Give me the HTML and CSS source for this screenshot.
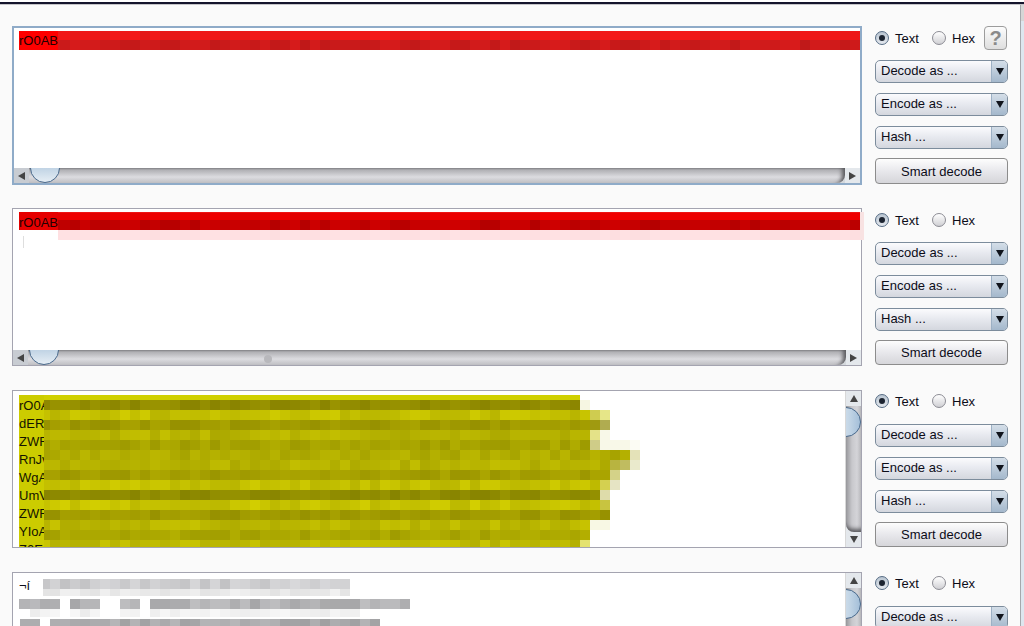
FILE: index.html
```html
<!DOCTYPE html>
<html lang="en">
<head>
<meta charset="utf-8">
<title>Decoder</title>
<link rel="stylesheet" href="styles.css">
</head>
<body>
<div class="topbar"></div>
<div class="shell">
  <main class="page">

    <section class="row">
      <div class="editor focused" data-mosaic="red1">
        <div class="text text-red1"><span class="hl-red">rO0AB</span></div>
        <div class="hscroll"><span class="arrow arrow-left"></span><div class="htrack"><span class="hthumb"></span></div><span class="arrow arrow-right"></span></div>
      </div>
      <div class="controls">
        <div class="modes">
          <label class="mode"><span class="radio on"></span>Text</label>
          <label class="mode mode-hex"><span class="radio"></span>Hex</label>
          <button class="help">?</button>
        </div>
        <div class="select"><span class="select-label">Decode as ...</span><span class="select-arrow"></span></div>
        <div class="select"><span class="select-label">Encode as ...</span><span class="select-arrow"></span></div>
        <div class="select"><span class="select-label">Hash ...</span><span class="select-arrow"></span></div>
        <button class="smart smart-tall">Smart decode</button>
      </div>
    </section>

    <section class="row">
      <div class="editor editor-short" data-mosaic="red2">
        <div class="text text-red2"><span class="hl-red hl-red2">rO0AB</span><span class="ibeam"></span></div>
        <div class="hscroll"><span class="arrow arrow-left"></span><div class="htrack"><span class="hthumb"></span><span class="blob"></span></div><span class="arrow arrow-right"></span></div>
      </div>
      <div class="controls">
        <div class="modes">
          <label class="mode"><span class="radio on"></span>Text</label>
          <label class="mode mode-hex"><span class="radio"></span>Hex</label>
        </div>
        <div class="select"><span class="select-label">Decode as ...</span><span class="select-arrow"></span></div>
        <div class="select"><span class="select-label">Encode as ...</span><span class="select-arrow"></span></div>
        <div class="select"><span class="select-label">Hash ...</span><span class="select-arrow"></span></div>
        <button class="smart">Smart decode</button>
      </div>
    </section>

    <section class="row">
      <div class="editor editor-v" data-mosaic="yellow">
        <div class="text text-yellow">
          <div class="yl">rO0A</div><div class="yl">dER</div><div class="yl">ZWF</div><div class="yl">RnJv</div><div class="yl">WgA</div><div class="yl">UmV</div><div class="yl">ZWF</div><div class="yl">YIoA</div><div class="yl">Z0E</div>
        </div>
        <div class="vscroll"><span class="arrow arrow-up"></span><div class="vtrack"><span class="vthumb"></span></div><span class="arrow arrow-down"></span></div>
      </div>
      <div class="controls">
        <div class="modes modes-tight">
          <label class="mode"><span class="radio on"></span>Text</label>
          <label class="mode mode-hex"><span class="radio"></span>Hex</label>
        </div>
        <div class="select"><span class="select-label">Decode as ...</span><span class="select-arrow"></span></div>
        <div class="select"><span class="select-label">Encode as ...</span><span class="select-arrow"></span></div>
        <div class="select"><span class="select-label">Hash ...</span><span class="select-arrow"></span></div>
        <button class="smart">Smart decode</button>
      </div>
    </section>

    <section class="row">
      <div class="editor editor-v" data-mosaic="gray">
        <div class="text text-gray">¬í</div>
        <div class="vscroll"><span class="arrow arrow-up"></span><div class="vtrack"><span class="vthumb"></span></div><span class="arrow arrow-down"></span></div>
      </div>
      <div class="controls">
        <div class="modes modes-tight">
          <label class="mode"><span class="radio on"></span>Text</label>
          <label class="mode mode-hex"><span class="radio"></span>Hex</label>
        </div>
        <div class="select"><span class="select-label">Decode as ...</span><span class="select-arrow"></span></div>
        <div class="select"><span class="select-label">Encode as ...</span><span class="select-arrow"></span></div>
        <div class="select"><span class="select-label">Hash ...</span><span class="select-arrow"></span></div>
        <button class="smart">Smart decode</button>
      </div>
    </section>

  </main>
  <aside class="rail"><div class="rail-cap"></div></aside>
</div>
<script src="mosaic.js"></script>
</body>
</html>
```
FILE: styles.css
```css
html, body {
  margin: 0;
  height: 100%;
  overflow: hidden;
}
body {
  background: #fafafa;
  font-family: "Liberation Sans", Arial, sans-serif;
  font-size: 13px;
  color: #0c0c18;
  display: flex;
  flex-direction: column;
}
.topbar {
  height: 2px;
  flex: none;
  background: #fff;
  border-bottom: 2px solid #14142c;
  box-shadow: 0 1px 0 #c4c4c8;
  position: relative;
  z-index: 2;
}
.shell {
  flex: 1;
  display: flex;
  min-height: 0;
}
.page {
  flex: 1;
  min-width: 0;
  padding: 22px 12px 0;
  overflow: hidden;
}
.rail {
  width: 3px;
  flex: none;
  border-left: 1px solid #a4a8ac;
  background: #dde6ee;
}
.rail-cap {
  height: 17px;
  background: #d6d6d6;
}
.row {
  display: flex;
  gap: 13px;
  height: 159px;
  margin-bottom: 23px;
}
.editor {
  width: 850px;
  flex: none;
  box-sizing: border-box;
  background: #fff;
  border: 1px solid #a4a4b0;
  display: flex;
  flex-direction: column;
  position: relative;
}
.editor.focused {
  border: 2px solid #8fabc8;
}
.editor-short {
  height: 158px;
}
.editor-v {
  flex-direction: row;
  height: 158px;
}
.text {
  flex: 1;
  min-width: 0;
  overflow: hidden;
  line-height: 18px;
  padding-left: 6px;
  position: relative;
  white-space: nowrap;
}
.text-red1 {
  padding-top: 3px;
  padding-left: 5px;
}
.text-red2 {
  padding-top: 3px;
}
.text-yellow {
  padding-top: 4px;
}
.text-gray {
  padding-top: 4px;
  line-height: 17px;
}
.hl-red {
  display: inline-block;
  background: #f00;
  height: 19px;
  line-height: 20px;
  vertical-align: top;
  color: #200;
}
.hl-red2 {
  background: #e60000;
  height: 18px;
  line-height: 21px;
}
.ibeam {
  position: absolute;
  left: 10px;
  top: 27px;
  width: 1px;
  height: 12px;
  background: #dedede;
}
.yl {
  width: 25px;
  background: #cccc00;
  height: 18px;
  line-height: 21px;
  color: #141400;
}
.hscroll {
  height: 15px;
  flex: none;
  display: flex;
  background: #d4d8dc;
}
.htrack {
  flex: 1;
  position: relative;
  overflow: hidden;
  background: linear-gradient(#808084 0, #b0b0b4 2px, #dcdce0 9px, #c8c8cc 13px, #c0c0c4 15px);
  border-radius: 0 0 8px 0;
  box-shadow: inset -7px 0 4px -4px #58585c;
}
.hthumb {
  position: absolute;
  left: 1px;
  top: -15px;
  width: 28px;
  height: 28px;
  border-radius: 50%;
  border: 1px solid #4a6a8c;
  background: linear-gradient(#a4bfd9, #c4d6e6 55%, #e6eef5);
}
.blob {
  position: absolute;
  left: 236px;
  top: 5px;
  width: 8px;
  height: 8px;
  border-radius: 50%;
  background: #b8b8bc;
}
.arrow {
  flex: none;
  display: flex;
  align-items: center;
  justify-content: center;
  width: 15px;
  height: 15px;
  background: #e4e8ec;
}
.arrow::before {
  content: "";
  border-style: solid;
  border-color: transparent;
}
.arrow-left::before {
  border-width: 4px 7px 4px 0;
  border-right-color: #444;
}
.arrow-right::before {
  border-width: 4px 0 4px 7px;
  border-left-color: #444;
}
.arrow-up::before {
  border-width: 0 4px 7px;
  border-bottom-color: #444;
}
.arrow-down::before {
  border-width: 7px 4px 0;
  border-top-color: #444;
}
.arrow-left {
  background: #c8ccd2;
}
.vscroll {
  width: 15px;
  flex: none;
  display: flex;
  flex-direction: column;
  border-left: 1px solid #d8d8d8;
  background: #e4e8ec;
}
.vtrack {
  flex: 1;
  position: relative;
  overflow: hidden;
  background: linear-gradient(90deg, #98989c 0, #c8c8cc 6px, #d4d4d8 11px, #b8b8bc 15px);
  border-radius: 0 0 0 8px;
  box-shadow: inset 0 -7px 4px -4px #58585c;
}
.vthumb {
  position: absolute;
  top: 1px;
  left: -15px;
  width: 28px;
  height: 28px;
  border-radius: 50%;
  border: 1px solid #4a6a8c;
  background: linear-gradient(90deg, #e6eef5, #c4d6e6 60%, #a4bfd9);
}
.controls {
  width: 133px;
  flex: none;
  display: flex;
  flex-direction: column;
  gap: 10px;
}
.modes {
  height: 24px;
  box-sizing: border-box;
  display: flex;
  align-items: center;
  position: relative;
}
.modes-tight {
  padding-bottom: 2px;
}
.mode {
  display: flex;
  align-items: center;
  gap: 6px;
  width: 57px;
}
.radio {
  width: 14px;
  height: 14px;
  box-sizing: border-box;
  border-radius: 50%;
  border: 1px solid #8c8c94;
  background: linear-gradient(#fff, #d0d0d4);
  flex: none;
  display: flex;
  align-items: center;
  justify-content: center;
}
.radio.on {
  border-color: #566c84;
  background: linear-gradient(#b8c4d0, #e4e8ee);
}
.radio.on::before {
  content: "";
  width: 6px;
  height: 6px;
  border-radius: 50%;
  background: #1c2430;
}
.help {
  position: absolute;
  right: 1px;
  top: 0;
  width: 23px;
  height: 24px;
  padding: 0;
  box-sizing: border-box;
  border: 1px solid #9c9c9c;
  border-radius: 4px;
  background: linear-gradient(#fcfcfc, #dedede);
  color: #8a8a8a;
  font: bold 20px/22px "Liberation Sans", Arial, sans-serif;
}
.select {
  height: 23px;
  box-sizing: border-box;
  display: flex;
  border: 1px solid #7c8c9c;
  border-radius: 5px;
  overflow: hidden;
  background: linear-gradient(#fbfbfd, #e8eaf0 45%, #d4d7de);
}
.select-label {
  flex: 1;
  padding-left: 5px;
  line-height: 20px;
}
.select-arrow {
  width: 15px;
  flex: none;
  display: flex;
  align-items: center;
  justify-content: center;
  border-left: 1px solid #9cb0c4;
  background: linear-gradient(#d4dee8, #a4b8cc);
}
.select-arrow::before {
  content: "";
  border-style: solid;
  border-width: 7px 4px 0;
  border-color: #10141c transparent transparent;
}
.smart {
  height: 25px;
  padding: 0;
  margin-top: -1px;
  border: 1px solid #8c8c8c;
  border-radius: 4px;
  background: linear-gradient(#fdfdfd, #e8e8ec 50%, #d6d6da);
  color: #0c0c18;
  font: 13px "Liberation Sans", Arial, sans-serif;
}
.smart-tall {
  height: 26px;
}
.mosaic {
  position: absolute;
  left: 0;
  top: 0;
  overflow: visible;
  pointer-events: none;
}
```
FILE: mosaic.js
```js
(function () {
  var seed = 7;
  function rnd() {
    seed = (seed * 16807) % 2147483647;
    return (seed % 1000) / 1000;
  }
  function shade(c, k) {
    return 'rgb(' + c.map(function (v) {
      return Math.max(0, Math.min(255, Math.round(v * k)));
    }).join(',') + ')';
  }
  function band(out, y, h, x0, x1, c, spread, holes) {
    var x = x0;
    while (x < x1) {
      var next = Math.min(x1, (Math.floor(x / 10) + 1) * 10);
      var k = 1 + (rnd() - 0.5) * spread;
      var hole = (holes || []).some(function (p) { return x >= p[0] && x < p[1]; });
      if (!hole) {
        out.push([x, y, next - x, h, shade(c, k)]);
      }
      x = next;
    }
  }
  var data = {
    red1: function (o) {
      band(o, 31, 9, 58, 860, [236, 24, 24], 0.08);
      band(o, 40, 10, 58, 860, [204, 26, 26], 0.12);
    },
    red2: function (o) {
      band(o, 212, 1, 58, 860, [238, 20, 20], 0);
      band(o, 213, 7, 58, 860, [232, 0, 0], 0.08);
      band(o, 220, 10, 58, 860, [194, 0, 0], 0.14);
      band(o, 230, 10, 58, 860, [255, 224, 226], 0.02);
      o.push([860, 212, 4, 28, 'rgb(248,226,226)']);
    },
    yellow: function (o) {
      o.push([44, 395, 536, 5, '#d0d000']);
      var rows = [
        [400, 580, [146, 140, 0], [[580, 590, '#f6f6e2']]],
        [410, 590, [196, 192, 0], [[590, 600, '#cfcc50'], [600, 610, '#e6e688']]],
        [420, 590, [160, 154, 0], [[590, 600, '#a09a10'], [600, 610, '#b0ac50']]],
        [430, 590, [184, 180, 0], [[590, 600, '#e4e288'], [600, 610, '#f8f8e8']]],
        [440, 590, [168, 164, 0], [[590, 600, '#cfcc88'], [600, 630, '#f8f8e8'], [630, 640, '#fcfcf4']]],
        [450, 630, [176, 172, 0], [[630, 640, '#e4e2b8']]],
        [460, 610, [184, 180, 0], [[610, 620, '#b8b440'], [620, 630, '#c0bc60'], [630, 640, '#eaeacc']]],
        [470, 610, [164, 158, 0], [[610, 620, '#d4d288']]],
        [480, 600, [196, 192, 0], [[600, 610, '#d4d050'], [610, 620, '#e6e4c4']]],
        [490, 600, [144, 140, 0], [[600, 610, '#dedcaa']]],
        [500, 610, [200, 196, 0], [[600, 610, '#c8c440']]],
        [510, 610, [160, 154, 0], []],
        [520, 590, [188, 184, 0], [[590, 610, '#f8f8e4']]],
        [530, 590, [170, 166, 0], []],
        [540, 580, [190, 186, 0], [[580, 590, '#e4e270']]]
      ];
      rows.forEach(function (r) {
        band(o, r[0], r[0] === 540 ? 7 : 10, 44, r[1], r[2], 0.12);
        r[3].forEach(function (t) {
          o.push([t[0], r[0], t[1] - t[0], r[0] === 540 ? 7 : 10, t[2]]);
        });
      });
    },
    gray: function (o) {
      band(o, 579, 10, 43, 350, [206, 206, 208], 0.12);
      band(o, 589, 7, 43, 350, [234, 234, 234], 0.07);
      band(o, 599, 10, 19, 410, [178, 178, 180], 0.14, [[60, 70], [100, 120], [140, 150]]);
      band(o, 609, 8, 30, 360, [242, 242, 242], 0.05, [[60, 70], [100, 120], [140, 150]]);
      band(o, 619, 7, 20, 380, [170, 170, 172], 0.14, [[40, 50]]);
    }
  };
  var NS = 'http://www.w3.org/2000/svg';
  document.querySelectorAll('[data-mosaic]').forEach(function (ed) {
    var box = ed.getBoundingClientRect();
    var cells = [];
    data[ed.getAttribute('data-mosaic')](cells);
    var svg = document.createElementNS(NS, 'svg');
    svg.setAttribute('class', 'mosaic');
    svg.setAttribute('width', 1);
    svg.setAttribute('height', 1);
    svg.setAttribute('shape-rendering', 'crispEdges');
    var ox = box.left + ed.clientLeft;
    var oy = box.top + ed.clientTop;
    cells.forEach(function (c) {
      var r = document.createElementNS(NS, 'rect');
      r.setAttribute('x', c[0] - ox);
      r.setAttribute('y', c[1] - oy);
      r.setAttribute('width', c[2]);
      r.setAttribute('height', c[3]);
      r.setAttribute('fill', c[4]);
      svg.appendChild(r);
    });
    ed.appendChild(svg);
  });
})();
```
